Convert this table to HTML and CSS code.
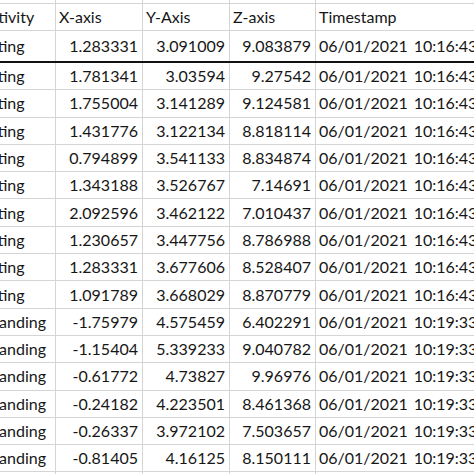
FILE: index.html
```html
<!DOCTYPE html>
<html>
<head>
<meta charset="utf-8">
<link rel="stylesheet" href="styles.css">
</head>
<body>
<div class="sheet">
  <div class="row strip"><div class="c a"></div><div class="c"></div><div class="c"></div><div class="c"></div><div class="c e"></div></div>
  <div class="row head">
    <div class="c a"><span class="lbl">Activity</span></div>
    <div class="c t">X-axis</div>
    <div class="c t">Y-Axis</div>
    <div class="c t">Z-axis</div>
    <div class="c t e">Timestamp</div>
  </div>
  <div class="row first">
    <div class="c a"><span class="lbl">Sitting</span></div>
    <div class="c n">1.283331</div><div class="c n">3.091009</div><div class="c n">9.083879</div><div class="c t e">06/01/2021 <span class="tm">10:16:43</span></div>
  </div>
  <div class="row"><div class="c a"><span class="lbl">Sitting</span></div><div class="c n">1.781341</div><div class="c n">3.03594</div><div class="c n">9.27542</div><div class="c t e">06/01/2021 <span class="tm">10:16:43</span></div></div>
  <div class="row"><div class="c a"><span class="lbl">Sitting</span></div><div class="c n">1.755004</div><div class="c n">3.141289</div><div class="c n">9.124581</div><div class="c t e">06/01/2021 <span class="tm">10:16:43</span></div></div>
  <div class="row"><div class="c a"><span class="lbl">Sitting</span></div><div class="c n">1.431776</div><div class="c n">3.122134</div><div class="c n">8.818114</div><div class="c t e">06/01/2021 <span class="tm">10:16:43</span></div></div>
  <div class="row"><div class="c a"><span class="lbl">Sitting</span></div><div class="c n">0.794899</div><div class="c n">3.541133</div><div class="c n">8.834874</div><div class="c t e">06/01/2021 <span class="tm">10:16:43</span></div></div>
  <div class="row"><div class="c a"><span class="lbl">Sitting</span></div><div class="c n">1.343188</div><div class="c n">3.526767</div><div class="c n">7.14691</div><div class="c t e">06/01/2021 <span class="tm">10:16:43</span></div></div>
  <div class="row"><div class="c a"><span class="lbl">Sitting</span></div><div class="c n">2.092596</div><div class="c n">3.462122</div><div class="c n">7.010437</div><div class="c t e">06/01/2021 <span class="tm">10:16:43</span></div></div>
  <div class="row"><div class="c a"><span class="lbl">Sitting</span></div><div class="c n">1.230657</div><div class="c n">3.447756</div><div class="c n">8.786988</div><div class="c t e">06/01/2021 <span class="tm">10:16:43</span></div></div>
  <div class="row"><div class="c a"><span class="lbl">Sitting</span></div><div class="c n">1.283331</div><div class="c n">3.677606</div><div class="c n">8.528407</div><div class="c t e">06/01/2021 <span class="tm">10:16:43</span></div></div>
  <div class="row"><div class="c a"><span class="lbl">Sitting</span></div><div class="c n">1.091789</div><div class="c n">3.668029</div><div class="c n">8.870779</div><div class="c t e">06/01/2021 <span class="tm">10:16:43</span></div></div>
  <div class="row"><div class="c a"><span class="lbl st">Standing</span></div><div class="c n">-1.75979</div><div class="c n">4.575459</div><div class="c n">6.402291</div><div class="c t e">06/01/2021 <span class="tm">10:19:33</span></div></div>
  <div class="row"><div class="c a"><span class="lbl st">Standing</span></div><div class="c n">-1.15404</div><div class="c n">5.339233</div><div class="c n">9.040782</div><div class="c t e">06/01/2021 <span class="tm">10:19:33</span></div></div>
  <div class="row"><div class="c a"><span class="lbl st">Standing</span></div><div class="c n">-0.61772</div><div class="c n">4.73827</div><div class="c n">9.96976</div><div class="c t e">06/01/2021 <span class="tm">10:19:33</span></div></div>
  <div class="row"><div class="c a"><span class="lbl st">Standing</span></div><div class="c n">-0.24182</div><div class="c n">4.223501</div><div class="c n">8.461368</div><div class="c t e">06/01/2021 <span class="tm">10:19:33</span></div></div>
  <div class="row"><div class="c a"><span class="lbl st">Standing</span></div><div class="c n">-0.26337</div><div class="c n">3.972102</div><div class="c n">7.503657</div><div class="c t e">06/01/2021 <span class="tm">10:19:33</span></div></div>
  <div class="row"><div class="c a"><span class="lbl st">Standing</span></div><div class="c n">-0.81405</div><div class="c n">4.16125</div><div class="c n">8.150111</div><div class="c t e">06/01/2021 <span class="tm">10:19:33</span></div></div>
  <div class="row"><div class="c a"></div><div class="c"></div><div class="c"></div><div class="c"></div><div class="c e"></div></div>
</div>
</body>
</html>
```

FILE: styles.css
```css
html, body {
  margin: 0;
  padding: 0;
  background: #ffffff;
}
body {
  width: 474px;
  height: 474px;
  overflow: hidden;
  font-family: Lato, "Open Sans", sans-serif;
  font-size: 16px;
  color: #161616;
}
.sheet {
  display: flex;
  flex-direction: column;
  width: 560px;
}
.row {
  display: grid;
  grid-template-columns: 56px 87px 87px 86px 244px;
  height: 27.3px;
  box-sizing: border-box;
}
.row.strip { height: 4px; }
.row.head { height: 27px; }
.row.first {
  height: 32px;
  border-bottom: 2px solid #111111;
}
.c {
  box-sizing: border-box;
  border-right: 1px solid #d4d4d4;
  border-bottom: 1px solid #d4d4d4;
  display: flex;
  align-items: center;
  white-space: nowrap;
  overflow: hidden;
  line-height: 1;
}
.row.first .c { border-bottom: none; }
.c.e { border-right: none; }
.c.n {
  justify-content: flex-end;
  padding-right: 4px;
}
.c.t {
  padding-left: 3px;
}
.lbl {
  display: block;
  flex: none;
  margin-left: -20px;
}
.lbl.st {
  margin-left: -15px;
}
.tm {
  margin-left: 6px;
}
```
